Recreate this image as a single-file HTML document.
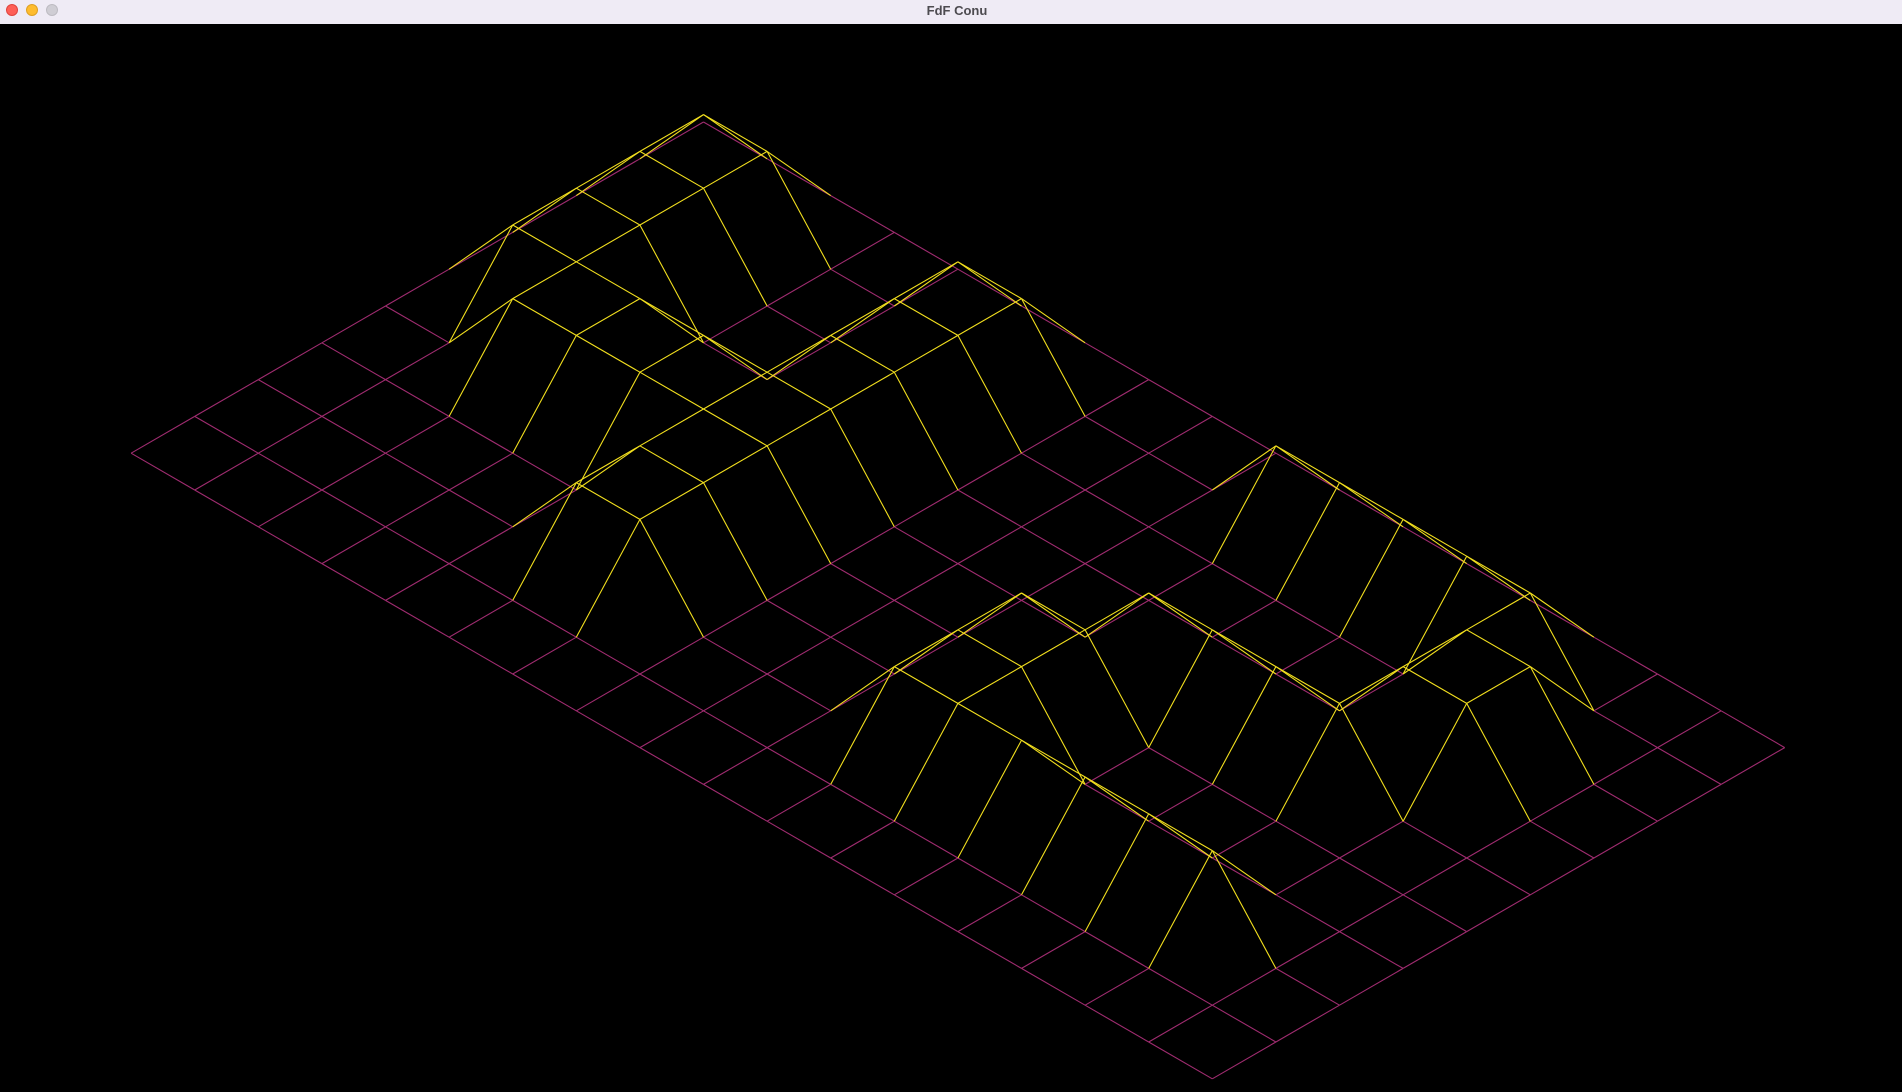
<!DOCTYPE html>
<html><head><meta charset="utf-8"><style>
html,body{margin:0;padding:0;background:#000;width:1902px;height:1092px;overflow:hidden}
#bar{position:absolute;left:0;top:0;width:1902px;height:24px;background:#efebf5;}
.dot{position:absolute;top:4px;width:12px;height:12px;border-radius:50%}
#title{position:absolute;left:6px;width:1902px;top:3px;text-align:center;font:bold 13px "Liberation Sans",sans-serif;color:#4d4b50}
svg{position:absolute;left:0;top:0}
</style></head><body>
<div id="bar">
<div class="dot" style="left:6px;background:#fe5f57;border:0.5px solid #e0443e;box-sizing:border-box"></div>
<div class="dot" style="left:26px;background:#febc2e;border:0.5px solid #dea123;box-sizing:border-box"></div>
<div class="dot" style="left:46px;background:#cfcdd4;border:0.5px solid #bdbbc2;box-sizing:border-box"></div>
<div id="title">FdF Conu</div>
</div>
<svg id="s" width="1902" height="1092" xmlns="http://www.w3.org/2000/svg"></svg>
<script>
var rows=[
"0 0 0 0 0 0 0 0 0 0 0 0 0 0 0 0 0 0",
"0 10 10 0 0 10 10 0 0 0 10 10 10 10 10 0 0 0",
"0 10 10 0 0 10 10 0 0 0 0 0 0 0 10 10 0 0",
"0 10 10 0 0 10 10 0 0 0 0 0 0 0 10 10 0 0",
"0 10 10 10 10 10 10 0 0 0 0 10 10 10 10 0 0 0",
"0 0 10 10 10 10 10 0 0 0 10 10 0 0 0 0 0 0",
"0 0 0 0 0 10 10 0 0 0 10 10 0 0 0 0 0 0",
"0 0 0 0 0 10 10 0 0 0 10 10 10 10 10 10 0 0",
"0 0 0 0 0 0 0 0 0 0 0 0 0 0 0 0 0 0",
"0 0 0 0 0 0 0 0 0 0 0 0 0 0 0 0 0 0"];
var m=rows.map(function(r){return r.split(/\s+/).map(Number);});
function P(i,j){var z=m[j][i];return [703.5+63.6*(i-j),122+36.8*(i+j)-8.1*z];}
var mag="",yel="";
function L(i1,j1,i2,j2){var a=P(i1,j1),b=P(i2,j2);
 var s='<line x1="'+a[0].toFixed(1)+'" y1="'+a[1].toFixed(1)+'" x2="'+b[0].toFixed(1)+'" y2="'+b[1].toFixed(1)+'"/>';
 if(m[j1][i1]||m[j2][i2])yel+=s;else mag+=s;}
for(var j=0;j<10;j++)for(var i=0;i<18;i++){
 if(i<17)L(i,j,i+1,j);
 if(j<9)L(i,j,i,j+1);
}
document.getElementById("s").innerHTML='<g stroke="#a02c70" stroke-width="1.1">'+mag+'</g><g stroke="#f2df1e" stroke-width="1.1">'+yel+'</g>';
</script>
</body></html>
